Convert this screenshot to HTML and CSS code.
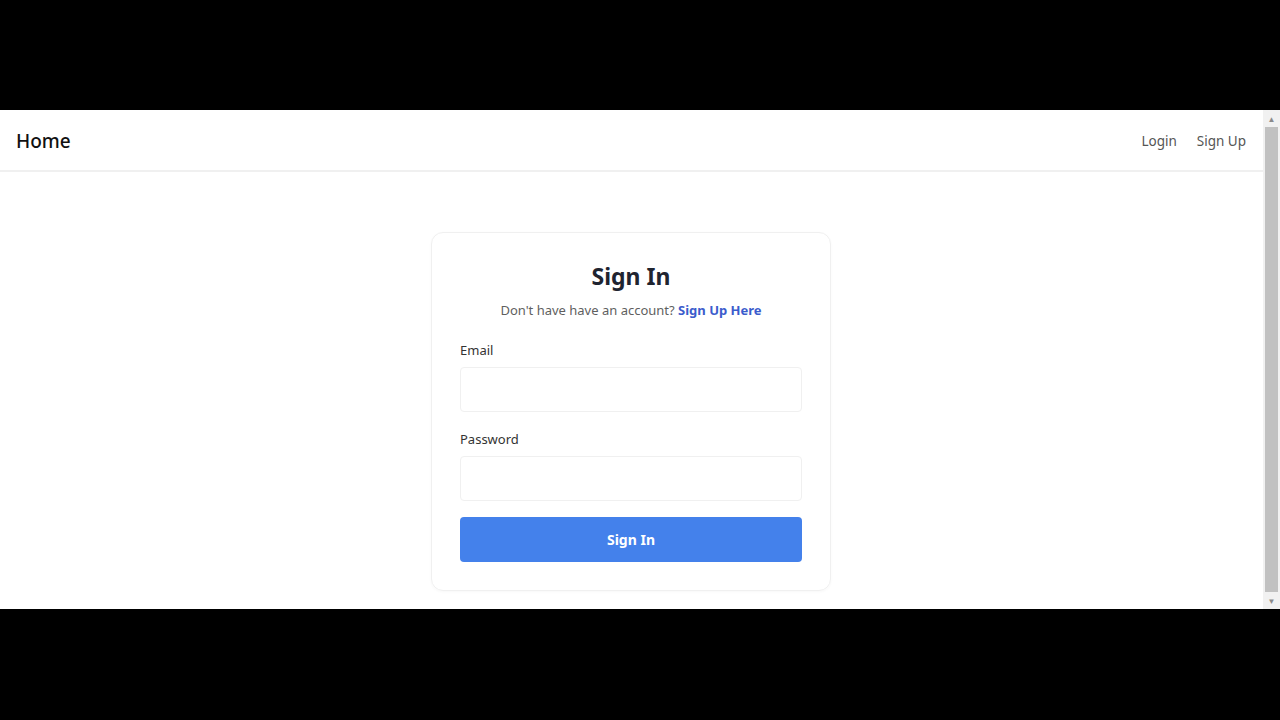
FILE: index.html
```html
<!DOCTYPE html>
<html lang="en">
<head>
  <meta charset="UTF-8">
  <title>Sign In</title>
  <link rel="stylesheet" href="styles.css">
</head>
<body>

  <div class="band-top"></div>

  <div class="window">
    <div class="page">
      <div class="navbar">
        <a class="brand" href="#">Home</a>
        <div class="nav-links">
          <a href="#">Login</a>
          <a href="#">Sign Up</a>
        </div>
      </div>

      <div class="main">
        <div class="card">
          <h1 class="card-title">Sign In</h1>
          <p class="card-sub">Don't have have an account? <a href="#">Sign Up Here</a></p>

          <div class="field">
            <label for="email">Email</label>
            <input id="email" type="email">
          </div>
          <div class="field">
            <label for="password">Password</label>
            <input id="password" type="password">
          </div>

          <button class="btn-primary">Sign In</button>
        </div>
      </div>
    </div>

    <div class="scrollbar">
      <div class="sb-arrow">&#9650;</div>
      <div class="sb-track"><div class="sb-thumb"></div></div>
      <div class="sb-arrow">&#9660;</div>
    </div>
  </div>

  <div class="band-bottom"></div>

</body>
</html>
```

FILE: styles.css
```css
html, body {
  height: 100%;
  margin: 0;
  padding: 0;
  font-family: "Noto Sans", "Open Sans", sans-serif;
  background-color: #000;
  overflow: hidden;
}

body {
  display: flex;
  flex-direction: column;
}

.band-top {
  height: 110px;
  flex-shrink: 0;
}

.band-bottom {
  flex: 1;
}

.window {
  height: 499px;
  display: flex;
  background-color: #fff;
}

.page {
  flex: 1;
  overflow: hidden;
}

.navbar {
  height: 59px;
  padding: 1px 16px 0;
  display: flex;
  align-items: center;
  justify-content: space-between;
  border-bottom: 2px solid #f0f0f0;
}

.brand {
  font-size: 19px;
  font-weight: 500;
  color: #111;
  text-decoration: none;
}

.nav-links {
  display: flex;
  gap: 20px;
  padding-right: 1px;
}

.nav-links a {
  font-size: 13.5px;
  color: #555;
  text-decoration: none;
}

.main {
  display: flex;
  justify-content: center;
  padding: 60px 1px 0 0;
}

.card {
  width: 400px;
  box-sizing: border-box;
  padding: 29px 28px 28px;
  border: 1px solid #f0f0f0;
  border-radius: 12px;
  box-shadow: 0 1px 3px rgba(0, 0, 0, 0.03);
}

.card-title {
  margin: 0;
  font-size: 23px;
  line-height: 29px;
  font-weight: bold;
  text-align: center;
  color: #1f2430;
}

.card-sub {
  margin: 9px 0 20px;
  font-size: 13px;
  line-height: 20px;
  text-align: center;
  color: #5f5f5f;
}

.card-sub a {
  color: #3b5ccc;
  font-weight: bold;
  text-decoration: none;
}

.field {
  margin-bottom: 17px;
}

.field label {
  display: block;
  font-size: 13px;
  line-height: 20px;
  color: #333;
  margin-bottom: 7px;
}

.field input {
  display: block;
  width: 100%;
  box-sizing: border-box;
  height: 45px;
  border: 1px solid #f0f0f0;
  border-radius: 4px;
  outline: none;
  padding: 0 12px;
  font-size: 14px;
}

.field:last-of-type {
  margin-bottom: 16px;
}

.btn-primary {
  display: block;
  width: 100%;
  height: 45px;
  border: none;
  border-radius: 4px;
  background-color: #4481eb;
  color: #fff;
  font-family: inherit;
  font-size: 14px;
  font-weight: bold;
  cursor: pointer;
}

.scrollbar {
  width: 17px;
  display: flex;
  flex-direction: column;
  background-color: #f1f1f1;
}

.sb-arrow {
  height: 17px;
  font-size: 8px;
  line-height: 17px;
  text-align: center;
  color: #8a8a8a;
}

.sb-track {
  flex: 1;
  padding: 0 2px;
}

.sb-thumb {
  height: 100%;
  background-color: #c1c1c1;
}
```
